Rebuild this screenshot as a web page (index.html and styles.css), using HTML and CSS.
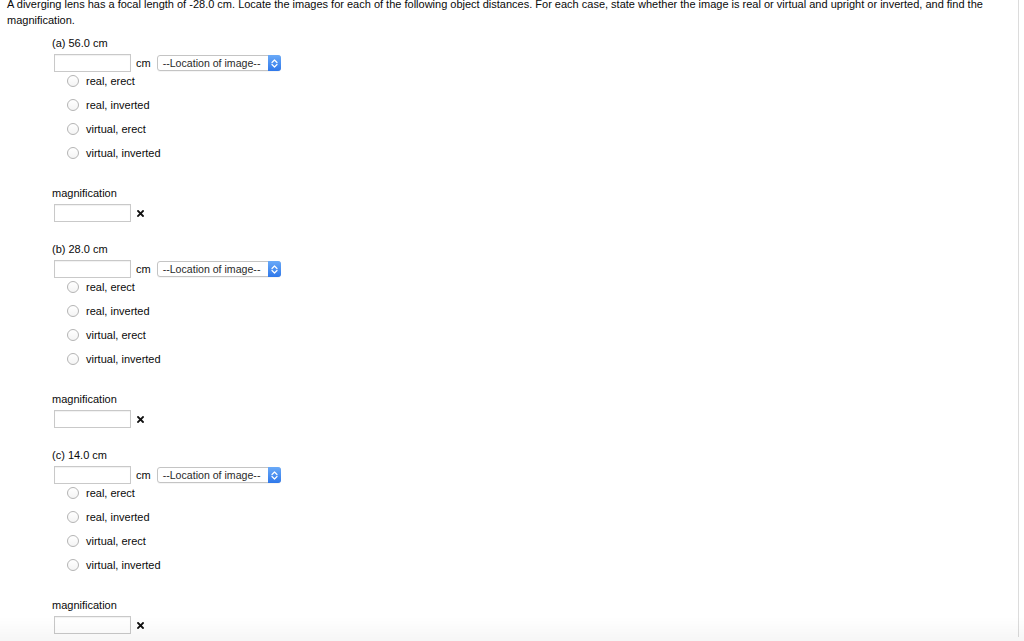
FILE: index.html
```html
<!DOCTYPE html>
<html lang="en">
<head>
<meta charset="utf-8">
<title>Diverging lens</title>
<link rel="stylesheet" href="styles.css">
</head>
<body>
<div class="page">
  <p class="question">A diverging lens has a focal length of -28.0 cm. Locate the images for each of the following object distances. For each case, state whether the image is real or virtual and upright or inverted, and find the magnification.</p>

  <div class="part">
    <div class="label">(a) 56.0 cm</div>
    <div class="answer-row">
      <input class="box" type="text">
      <span class="unit">cm</span>
      <div class="select"><span class="select-text">--Location of image--</span><span class="select-btn"><svg width="7" height="9" viewBox="0 0 7 9"><path d="M1 3.5 L3.5 1 L6 3.5 M1 5.5 L3.5 8 L6 5.5" fill="none" stroke="#fff" stroke-width="1.2" stroke-linecap="round" stroke-linejoin="round"/></svg></span></div>
    </div>
    <div class="radios">
      <label class="radio"><input type="radio" name="a"><span>real, erect</span></label>
      <label class="radio"><input type="radio" name="a"><span>real, inverted</span></label>
      <label class="radio"><input type="radio" name="a"><span>virtual, erect</span></label>
      <label class="radio"><input type="radio" name="a"><span>virtual, inverted</span></label>
    </div>
    <div class="label mag">magnification</div>
    <div class="answer-row">
      <input class="box" type="text">
      <svg class="wrong" width="7" height="7" viewBox="0 0 7 7"><path d="M1 1 L6 6 M6 1 L1 6" stroke="#111" stroke-width="1.8" stroke-linecap="square"/></svg>
    </div>
  </div>

  <div class="part">
    <div class="label">(b) 28.0 cm</div>
    <div class="answer-row">
      <input class="box" type="text">
      <span class="unit">cm</span>
      <div class="select"><span class="select-text">--Location of image--</span><span class="select-btn"><svg width="7" height="9" viewBox="0 0 7 9"><path d="M1 3.5 L3.5 1 L6 3.5 M1 5.5 L3.5 8 L6 5.5" fill="none" stroke="#fff" stroke-width="1.2" stroke-linecap="round" stroke-linejoin="round"/></svg></span></div>
    </div>
    <div class="radios">
      <label class="radio"><input type="radio" name="b"><span>real, erect</span></label>
      <label class="radio"><input type="radio" name="b"><span>real, inverted</span></label>
      <label class="radio"><input type="radio" name="b"><span>virtual, erect</span></label>
      <label class="radio"><input type="radio" name="b"><span>virtual, inverted</span></label>
    </div>
    <div class="label mag">magnification</div>
    <div class="answer-row">
      <input class="box" type="text">
      <svg class="wrong" width="7" height="7" viewBox="0 0 7 7"><path d="M1 1 L6 6 M6 1 L1 6" stroke="#111" stroke-width="1.8" stroke-linecap="square"/></svg>
    </div>
  </div>

  <div class="part">
    <div class="label">(c) 14.0 cm</div>
    <div class="answer-row">
      <input class="box" type="text">
      <span class="unit">cm</span>
      <div class="select"><span class="select-text">--Location of image--</span><span class="select-btn"><svg width="7" height="9" viewBox="0 0 7 9"><path d="M1 3.5 L3.5 1 L6 3.5 M1 5.5 L3.5 8 L6 5.5" fill="none" stroke="#fff" stroke-width="1.2" stroke-linecap="round" stroke-linejoin="round"/></svg></span></div>
    </div>
    <div class="radios">
      <label class="radio"><input type="radio" name="c"><span>real, erect</span></label>
      <label class="radio"><input type="radio" name="c"><span>real, inverted</span></label>
      <label class="radio"><input type="radio" name="c"><span>virtual, erect</span></label>
      <label class="radio"><input type="radio" name="c"><span>virtual, inverted</span></label>
    </div>
    <div class="label mag">magnification</div>
    <div class="answer-row">
      <input class="box" type="text">
      <svg class="wrong" width="7" height="7" viewBox="0 0 7 7"><path d="M1 1 L6 6 M6 1 L1 6" stroke="#111" stroke-width="1.8" stroke-linecap="square"/></svg>
    </div>
  </div>
</div>
<div class="bottom-fade"></div>
</body>
</html>
```

FILE: styles.css
```css
html, body {
  margin: 0;
  padding: 0;
  background: #fff;
  overflow: hidden;
  height: 641px;
}
body {
  font-family: "Liberation Sans", Arial, Helvetica, sans-serif;
  font-size: 11px;
  line-height: 16px;
  color: #0a0a0a;
}
.page {
  width: 1019px;
  height: 641px;
  box-sizing: border-box;
  border-right: 1px solid #dcdcdc;
  padding: 0 10px 0 7px;
}
.question {
  margin: -4px 0 0 0;
}
.part {
  margin-left: 45px;
  padding-top: 7px;
}
.part + .part {
  padding-top: 19px;
}
.label {
  height: 16px;
}
.label.mag {
  margin-top: 24px;
}
.answer-row {
  display: flex;
  align-items: center;
  height: 18px;
  margin-top: 3px;
}
.box {
  width: 77px;
  height: 18px;
  box-sizing: border-box;
  margin: 0 0 0 2px;
  padding: 0;
  border: 1px solid #c9c9c9;
  box-shadow: inset 0 1px 1px rgba(0,0,0,0.06);
  background: #fff;
  outline: none;
}
.unit {
  margin-left: 5px;
}
.select {
  display: flex;
  align-items: stretch;
  margin-left: 6px;
  width: 124px;
  height: 16px;
  box-sizing: border-box;
  border: 1px solid #c4c4c4;
  border-radius: 3px;
  background: #fff;
  box-shadow: 0 1px 0 rgba(0,0,0,0.04);
}
.select-text {
  flex: 1;
  font-size: 10.6px;
  line-height: 14px;
  padding-left: 5px;
  color: #2a2a2a;
  white-space: nowrap;
  overflow: hidden;
}
.select-btn {
  width: 13px;
  flex: none;
  margin: -1px -1px -1px 0;
  border-radius: 0 3px 3px 0;
  background: linear-gradient(#6aaaf8, #2f78ea);
  display: flex;
  align-items: center;
  justify-content: center;
}
.radios {
  display: flex;
  flex-direction: column;
  gap: 8px;
  margin-top: 1px;
}
.radio {
  display: flex;
  align-items: center;
  height: 16px;
}
.radio input {
  appearance: none;
  -webkit-appearance: none;
  width: 12px;
  height: 12px;
  margin: 0 7px 0 15px;
  box-sizing: border-box;
  border: 1px solid #b4b4b4;
  border-radius: 50%;
  background: linear-gradient(#ffffff, #f4f4f4);
}
.wrong {
  margin-left: 6px;
  margin-top: 1px;
}
.bottom-fade {
  position: fixed;
  left: 0;
  right: 0;
  bottom: 0;
  height: 24px;
  background: linear-gradient(rgba(0,0,0,0), rgba(0,0,0,0.035));
  pointer-events: none;
}
```
